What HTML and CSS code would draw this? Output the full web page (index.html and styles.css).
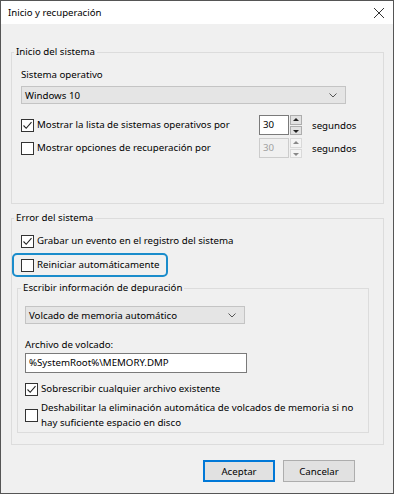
FILE: index.html
```html
<!DOCTYPE html>
<html lang="es">
<head>
    <meta charset="UTF-8">
    <meta name="viewport" content="width=device-width, initial-scale=1.0">
    <title>Inicio y recuperación</title>
    <link rel="stylesheet" href="styles.css">
</head>
<body>
    <div class="dialog">
        <div class="titlebar">
            <span class="title">Inicio y recuperación</span>
            <svg class="close" width="12" height="12" viewBox="0 0 12 12">
                <path d="M1 1 L11 11 M11 1 L1 11" stroke="#333" stroke-width="1" fill="none"/>
            </svg>
        </div>

        <div class="content">
            <fieldset class="group startup">
                <legend>Inicio del sistema</legend>
                <div class="label">Sistema operativo</div>
                <div class="combo os-combo">
                    <span>Windows 10</span>
                    <svg class="chevron" width="8" height="5" viewBox="0 0 8 5"><path d="M0.5 0.5 L4 4 L7.5 0.5" stroke="#555" fill="none"/></svg>
                </div>

                <div class="spin-row first">
                    <div class="check"><span class="box checked"><svg width="11" height="11" viewBox="0 0 11 11"><path d="M1.5 5.5 L4.2 8.3 L9.5 2.2" stroke="#222" stroke-width="1.1" fill="none"/></svg></span>Mostrar la lista de sistemas operativos por</div>
                    <div class="spin">
                        <div class="spin-field">30</div>
                        <div class="spin-buttons">
                            <span class="up"></span>
                            <span class="down"></span>
                        </div>
                    </div>
                    <span class="unit">segundos</span>
                </div>

                <div class="spin-row">
                    <div class="check"><span class="box"></span>Mostrar opciones de recuperación por</div>
                    <div class="spin disabled">
                        <div class="spin-field">30</div>
                        <div class="spin-buttons">
                            <span class="up"></span>
                            <span class="down"></span>
                        </div>
                    </div>
                    <span class="unit">segundos</span>
                </div>
            </fieldset>

            <fieldset class="group failure">
                <legend>Error del sistema</legend>
                <div class="check"><span class="box checked"><svg width="11" height="11" viewBox="0 0 11 11"><path d="M1.5 5.5 L4.2 8.3 L9.5 2.2" stroke="#222" stroke-width="1.1" fill="none"/></svg></span>Grabar un evento en el registro del sistema</div>
                <div class="highlight">
                    <div class="check"><span class="box"></span>Reiniciar automáticamente</div>
                </div>

                <fieldset class="group debug">
                    <legend>Escribir información de depuración</legend>
                    <div class="combo dump-combo">
                        <span>Volcado de memoria automático</span>
                        <svg class="chevron" width="8" height="5" viewBox="0 0 8 5"><path d="M0.5 0.5 L4 4 L7.5 0.5" stroke="#555" fill="none"/></svg>
                    </div>
                    <div class="label file-label">Archivo de volcado:</div>
                    <div class="textbox">%SystemRoot%\MEMORY.DMP</div>
                    <div class="check overwrite"><span class="box checked"><svg width="11" height="11" viewBox="0 0 11 11"><path d="M1.5 5.5 L4.2 8.3 L9.5 2.2" stroke="#222" stroke-width="1.1" fill="none"/></svg></span>Sobrescribir cualquier archivo existente</div>
                    <div class="check multiline"><span class="box"></span><span>Deshabilitar la eliminación automática de volcados de memoria si no<br>hay suficiente espacio en disco</span></div>
                </fieldset>
            </fieldset>

            <div class="buttons">
                <button class="default">Aceptar</button>
                <button>Cancelar</button>
            </div>
        </div>
    </div>
</body>
</html>
```

FILE: styles.css
```css
* {
    margin: 0;
    padding: 0;
    box-sizing: border-box;
}

body {
    font-family: "Noto Sans", "Open Sans", sans-serif;
    font-size: 9.7px;
    color: #000;
    background: #fff;
}

.dialog {
    width: 394px;
    height: 494px;
    border: 1px solid #555;
    background-color: #f0f0f0;
}

.titlebar {
    height: 23px;
    background-color: #fff;
    display: flex;
    align-items: center;
    justify-content: space-between;
    padding: 0 7px 0 7px;
}

.title {
    font-size: 9.6px;
}

.close {
    margin-right: 1px;
}

.content {
    padding: 21px 9px 0 10px;
    white-space: nowrap;
}

/* Group boxes */
.group {
    border: 1px solid #dcdcdc;
    padding: 0 9px 0 9px;
}

.group legend {
    line-height: 14px;
    padding: 0 2px;
    margin-left: -7px;
}

.startup {
    padding-bottom: 45px;
}

.failure {
    margin-top: 7px;
    padding-top: 8px;
    padding-bottom: 11px;
}

.debug {
    width: 352px;
    margin-left: -4px;
    margin-top: 4px;
    padding: 11px 7px 2px 7px;
}

.debug legend {
    margin-left: -4px;
}

.label {
    line-height: 14px;
    margin-top: 9px;
}

/* Combo boxes */
.combo {
    height: 18px;
    background-color: #e5e5e5;
    border: 1px solid #c4c4c4;
    display: flex;
    align-items: center;
    justify-content: space-between;
    padding: 0 8px 0 3px;
    margin-top: 4px;
}

.os-combo {
    width: 325px;
}

.dump-combo {
    width: 220px;
    margin-top: 0;
}

.file-label {
    margin-top: 14px;
}

.textbox {
    width: 222px;
    height: 20px;
    margin-top: 1px;
    background-color: #fff;
    border: 1px solid #7a7a7a;
    line-height: 18px;
    padding-left: 3px;
}

/* Check boxes */
.check {
    display: flex;
    align-items: center;
    height: 16px;
    line-height: 14px;
}

.box {
    width: 13px;
    height: 13px;
    border: 1px solid #333;
    background-color: #fff;
    margin-right: 3px;
    flex-shrink: 0;
    display: flex;
}

.box svg {
    display: block;
}

.overwrite {
    margin-top: 8px;
}

.multiline {
    height: 30px;
    margin-top: 3px;
    line-height: 15px;
    align-items: center;
}

.highlight {
    width: 156px;
    height: 24px;
    margin-left: -9px;
    margin-top: 4px;
    border: 2px solid #1a8ccb;
    border-radius: 5px;
    padding-left: 7px;
    display: flex;
    align-items: center;
}

/* Spin rows */
.spin-row {
    display: grid;
    grid-template-columns: 238px 43px auto;
    align-items: center;
    height: 20px;
    margin-top: 3px;
}

.spin-row.first {
    margin-top: 11px;
}

.unit {
    margin-left: 10px;
}

.spin {
    display: flex;
    height: 20px;
}

.spin-field {
    width: 30px;
    height: 20px;
    background-color: #fff;
    border: 1px solid #7a7a7a;
    line-height: 18px;
    padding-left: 3px;
}

.spin-buttons {
    width: 12px;
    margin-left: 1px;
    display: flex;
    flex-direction: column;
    gap: 1px;
}

.spin-buttons span {
    flex: 1;
    background-color: #e1e1e1;
    border: 1px solid #adadad;
    position: relative;
}

.spin-buttons span::after {
    content: "";
    position: absolute;
    left: 2px;
    border-left: 3px solid transparent;
    border-right: 3px solid transparent;
}

.spin-buttons .up::after {
    top: 2px;
    border-bottom: 3px solid #222;
}

.spin-buttons .down::after {
    top: 3px;
    border-top: 3px solid #222;
}

.spin.disabled .spin-field {
    background-color: #f0f0f0;
    border-color: #cccccc;
    color: #a0a0a0;
}

.spin.disabled .spin-buttons span {
    background-color: #f4f4f4;
    border-color: #d9d9d9;
}

.spin.disabled .spin-buttons .up::after {
    border-bottom-color: #888;
}

.spin.disabled .spin-buttons .down::after {
    border-top-color: #888;
}

/* Buttons */
.buttons {
    display: flex;
    justify-content: flex-end;
    gap: 8px;
    margin-top: 15px;
    padding-right: 29px;
}

button {
    width: 72px;
    height: 22px;
    font-family: inherit;
    font-size: 9.7px;
    background-color: #e1e1e1;
    border: 1px solid #adadad;
    color: #000;
}

button.default {
    border: 2px solid #0078d7;
}
```
